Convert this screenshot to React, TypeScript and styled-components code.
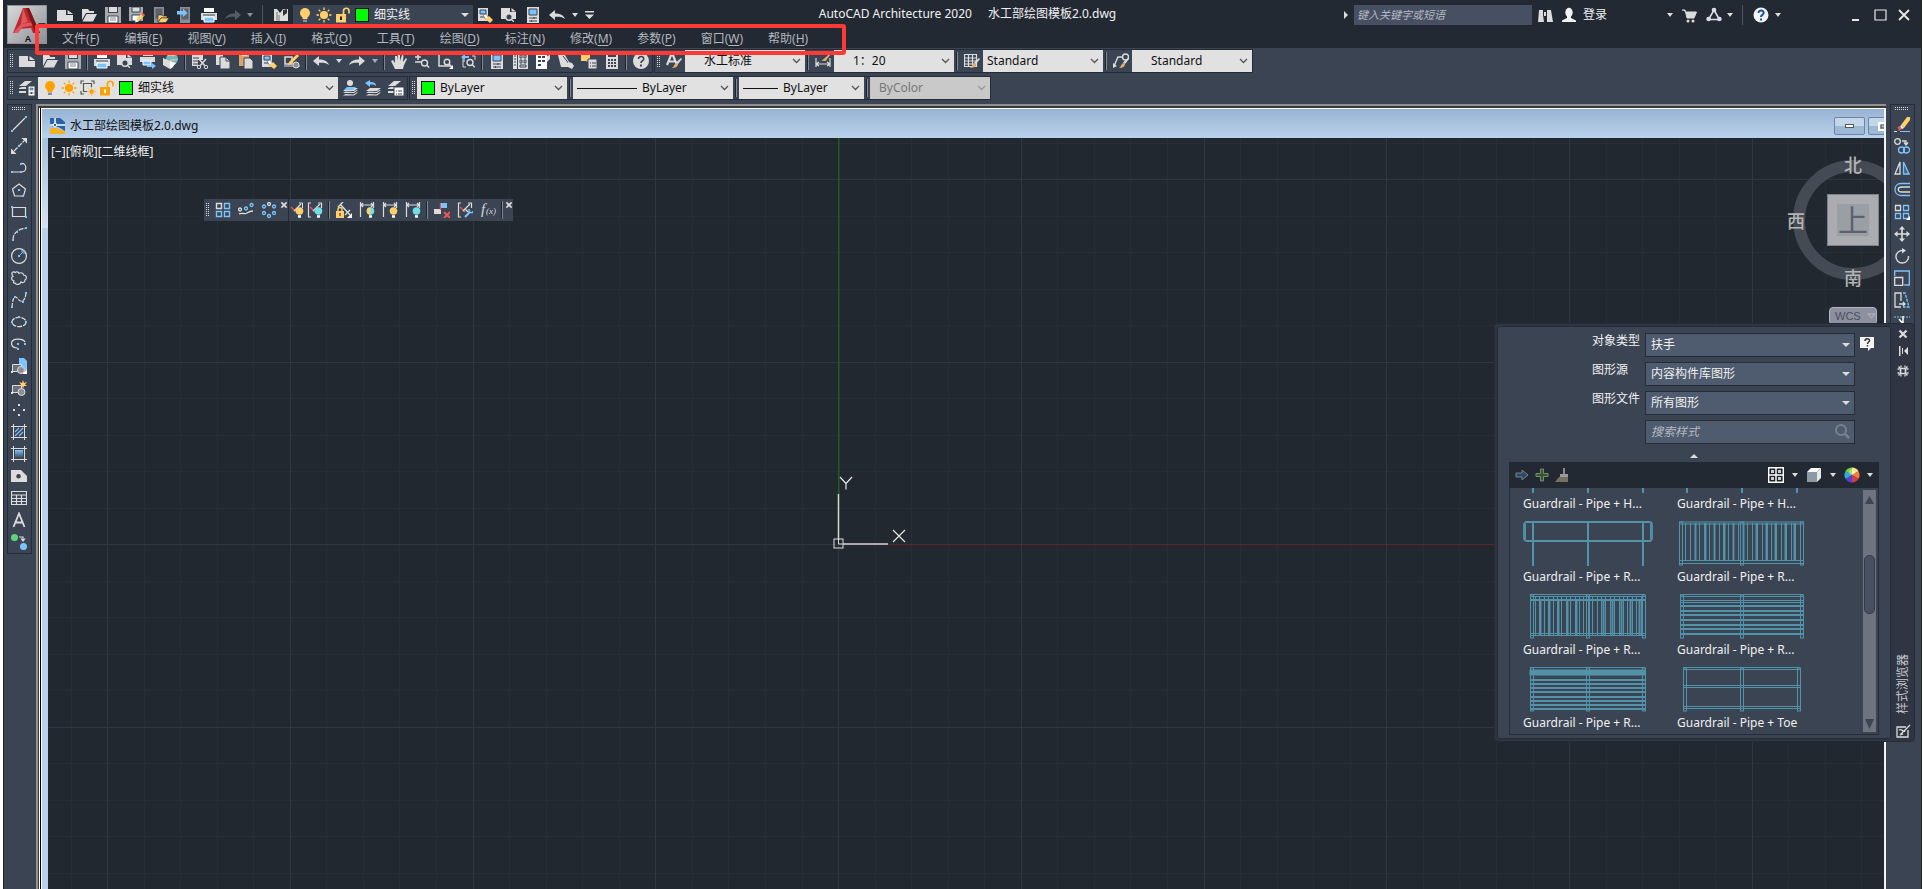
import React from "react";
import styled, { createGlobalStyle, css } from "styled-components";

const FONT = '"Noto Sans", "Noto Sans CJK SC", sans-serif';
const L = "#dcdcdc";
const B = "#7cc4ff";
const Y = "#ffcf6b";
const R = "#f0545a";
const P = "#3b4453";
const T = "#5293a9";

const GlobalStyle = createGlobalStyle`
  * { box-sizing: border-box; }
  body { margin: 0; background: #fff; font-family: ${FONT}; font-size: 12px; line-height: 16px; overflow: hidden; }
  button, select, input { font: inherit; color: inherit; border: 0; margin: 0; border-radius: 0; }
  button { background: none; padding: 0; }
  svg { display: block; flex: none; }
`;

/* ---------- icon drawings, all on a 16 x 16 grid ---------- */

const glass = (x: number, y: number, r = 3, c = L) => (
  <g fill="none" stroke={c} strokeWidth="1.4">
    <circle cx={x} cy={y} r={r} fill={P} />
    <path d={`M${x + r * 0.7} ${y + r * 0.7}l2.6 2.6`} />
  </g>
);
const dot = (x: number, y: number, c = B) => <rect x={x} y={y} width="2" height="2" fill={c} />;
const pencil = (
  <g>
    <path d="M7 12l6-6 2.5 2.5-6 6z" fill={Y} />
    <path d="M7 12l2.500 2.500L6 15.500z" fill="#fff" />
    <path d="M12 7l1.500-1.500L16 8l-1.500 1.500z" fill={R} />
  </g>
);
const brush = (
  <g>
    <path d="M16 6l-4 5-2-1.500L15 5z" fill={L} />
    <path d="M12 11c0 3-3 4-6 4 2-1 1.500-3 4-5z" fill="#e0ad70" />
  </g>
);
const layers = (c = L) => (
  <g fill={c}>
    <path d="M5 8h11l-4 3H1z" />
    <path d="M3.500 11.500L1 13h11l4-3h-1.500l-3 2z" />
    <path d="M3.500 14L1 15.500h11l4-3h-1.500l-3 2z" />
  </g>
);
const bulb = (c: string) => (
  <g>
    <circle cx="8" cy="6" r="5" fill={c} />
    <path d="M5.500 9h5v3h-5z" fill={c} />
    <path d="M6 12.500h4V15H6z" fill="#8a8f96" />
  </g>
);
const sun = (c: string) => (
  <g stroke={c} strokeWidth="1.300">
    <circle cx="8" cy="8" r="3.400" fill={c} />
    <path d="M8 .5v2.500M8 13v2.500M.5 8H3M13 8h2.500M2.700 2.700l1.700 1.700M11.600 11.600l1.700 1.700M2.700 13.300l1.700-1.700M11.600 4.400l1.700-1.700" />
  </g>
);
const lock = (c: string, hole: string) => (
  <g>
    <path d="M1 7h10v8.500H1z" fill={c} />
    <path d="M8.500 7V4a2.700 2.700 0 0 1 5.500 0v2.500" fill="none" stroke={c} strokeWidth="1.700" />
    <path d="M5 9.500h2V13H5z" fill={hole} />
  </g>
);
const undo = (c: string) => <path d="M0 8l6-5v3.500c5 0 8.500 1.500 10 5.500-2.500-2-5.500-2.500-10-2.200V13z" fill={c} />;
const redo = (c: string) => <path d="M16 8l-6-5v3.500C5 6.500 1.500 8 0 12c2.500-2 5.500-2.500 10-2.200V13z" fill={c} />;
const props = (
  <g>
    <path d="M2 0h12v16H2z" fill={L} />
    <path d="M4 2h8v6H4z" fill={B} stroke={P} />
    <path d="M4 11h8M4 14h8M9 10v2M6.500 13v2" stroke={P} />
  </g>
);
const dimBase = <path d="M1.500 0v15M14.500 0v6M2 3h12M4 1L2 3l2 2M12 1l2 2-2 2" fill="none" stroke={L} strokeWidth="1.200" />;
const lamp = (c: string, half?: string, x = 11.5) => (
  <g>
    <circle cx={x} cy="9" r="3.800" fill={c} />
    {half && <path d={`M${x} 5.200a3.800 3.800 0 0 0 0 7.600z`} fill={half} />}
    <path d={`M${x - 1.5} 13.200h3v2.500h-3z`} fill="#fff" />
  </g>
);
const bracket = <path d="M4 1H1.500v14H4M11 1h3.500v5" fill="none" stroke={L} strokeWidth="1.200" />;
const slash = (
  <g fill="none" strokeWidth="1.300">
    <path d="M3 5l5 5" stroke={R} />
    <path d="M6 9l7-7M8 7l3 3" stroke={L} />
  </g>
);

const ICONS: Record<string, React.ReactNode> = {
  fresh: <path d="M0 3h9v5h7v6H0zM10.500 3L16 7h-5.500z" fill={L} />,
  open: <path d="M1 2h6l1.500 2H13v2H5L1 13zM5.500 7H16l-4 7.500H1.500z" fill={L} />,
  save: (
    <g>
      <path d="M0 0h16v16H0z" fill="#a9abae" />
      <path d="M3 0h10v6H3z" fill={P} /><path d="M4 0h8v5H4z" fill={L} />
      <path d="M3 9h10v7H3z" fill="#fff" stroke={P} /><path d="M5 11h6M5 13h6" stroke="#888" />
    </g>
  ),
  saveAs: (
    <g>
      <path d="M0 0h14v14H0z" fill="#a9abae" /><path d="M3 0h8v5H3z" fill={L} stroke={P} />
      <path d="M3 8h8v6H3z" fill="#fff" stroke={P} />{pencil}
    </g>
  ),
  exportDoc: (
    <g>
      <path d="M1 0h10v16H1z" fill="#8c8f93" /><path d="M2.500 1.500h7v10h-7z" fill="#5b616b" />
      <path d="M5 8h4l1 1h4v2H8l-3 4z" fill={Y} stroke="#222933" strokeWidth=".6" /><path d="M8 11h8l-3 4.500H5z" fill={Y} stroke="#222933" strokeWidth=".6" />
    </g>
  ),
  importDoc: (
    <g>
      <path d="M3 0h10v16H3z" fill="#8c8f93" /><path d="M4.500 1.500h7v11h-7z" fill="#5b616b" />
      <path d="M0 4h6V1.500L10.500 6 6 10V7.500H0z" fill={B} />
    </g>
  ),
  print: (
    <g>
      <path d="M3 1h10v4H3z" fill="#fff" /><path d="M0 6h16v7H0z" fill={L} />
      <path d="M2 8h12" stroke={P} /><path d="M3 10h10v5H3z" fill={B} stroke="#fff" />
    </g>
  ),
  redo: redo(L),
  redoDim: redo("#555b66"),
  undo: undo(L),
  workspace: (
    <g>
      <path d="M1 2h3l3 4 3-4h5v12H1z" fill={L} /><path d="M4 5v9M6 8v6" stroke="#777" />
      <path d="M10 3l4-1v4l-4 3z" fill="#333" />
    </g>
  ),
  bulb: bulb(Y), bulbOn: bulb("#ffa200"), sun: sun(Y), sunOn: sun("#ffa200"),
  lock: lock(Y, "#222"), lockOn: lock("#ffa200", "#fff"),
  freeze: (
    <g>
      <path d="M1 4V1h3M11 1h3v3M1 11v3h3" fill="none" stroke="#555" strokeWidth="1.200" />
      <path d="M3.500 3.500h8v8h-8z" fill="none" stroke="#555" strokeWidth="1.200" />
      <g transform="translate(7 7) scale(.58)"><circle cx="8" cy="8" r="8" fill="#e1e1e1" />{sun("#ffa200")}</g>
    </g>
  ),
  match: (
    <g>
      <path d="M1 1h10v13H1z" fill={L} /><path d="M3 3h6v4H3z" fill={B} stroke={P} />
      <path d="M3 10h5" stroke={P} /><path d="M6 8l3-1 3 4-3 2z" fill="#fff" stroke={P} strokeWidth=".5" />
      <path d="M8 12l4-3 4 4-3 3z" fill={Y} />
    </g>
  ),
  preview: <g><path d="M0 1h9v4h6v7H0zM10.500 1L15 4.500h-4.500z" fill={L} />{glass(8, 10, 3.2)}</g>,
  props,
  publish: (
    <g>
      <path d="M3 0h10v3H3zM0 4h15v5H0z" fill={L} /><path d="M3 8h8v4H3z" fill={B} stroke="#fff" />
      <path d="M7 12h5v-2l4 3-4 3v-2H7z" fill={B} />
    </g>
  ),
  globe: (
    <g>
      <circle cx="9" cy="6" r="6" fill="#69b8c8" /><path d="M5 3c3-3 4 1 7-1M6 9c3-4 5-1 8-3" stroke="#e5c08a" strokeWidth="1.500" fill="none" />
      <path d="M0 5l7 3v8l-7-4z" fill={L} /><path d="M7 8l6 2-4 5-2 1z" fill="#fff" />
    </g>
  ),
  cut: (
    <g>
      <path d="M0 2h11v5H6v6H0z" fill={L} /><path d="M1 5h6M1 8h5M1 11h5" stroke={P} />
      <path d="M7 6l7 8M14 6l-7 8" stroke={L} strokeWidth="1.500" />
      <circle cx="7" cy="14" r="1.700" fill={P} stroke={L} /><circle cx="14" cy="14" r="1.700" fill={P} stroke={L} />
    </g>
  ),
  copy: <g><path d="M1 1h7v11H1z" fill={L} /><path d="M5 4h6l4 4v8H5z" fill={L} stroke={P} /><path d="M11 4v4h4" fill="none" stroke={P} /></g>,
  paste: <g><path d="M1 2h10v11H1z" fill="#d9a46a" /><path d="M4 0h5v3H4z" fill={L} /><path d="M6 5h6l3 3v8H6z" fill={L} stroke={P} /></g>,
  blockEdit: (
    <g>
      <path d="M1 4h7v7H1z" fill="none" stroke={L} strokeWidth="1.500" /><path d="M0 13h16" stroke={L} />
      <circle cx="12" cy="12" r="3" fill="#8c8f93" stroke={L} /><path d="M5 9l8-8 2 2-8 8-3 1z" fill={Y} />
    </g>
  ),
  pan: <path d="M4 16L0 8l2-1 2 3V3h2v5l1-7h2v7l2-6 1.500.5L12 9l3-4 1 1-3 6-1 4z" fill={L} />,
  zoomRt: <g><path d="M1 4h6M4 1v6M1 9h6" stroke={L} strokeWidth="1.500" />{glass(10.5, 10)}</g>,
  zoomWin: <g><path d="M2 1v12h12" fill="none" stroke={L} strokeWidth="1.500" />{glass(10, 9, 2.8)}<path d="M16 12v4h-4z" fill="#fff" /></g>,
  zoomPrev: <g><path d="M3 5v9h3M12 3h3v4M3 8h2" fill="none" stroke={L} /><path d="M1 4l4-3v2h4v2H5v2z" fill={B} />{glass(10, 9.5, 3)}</g>,
  design: <g><path d="M1 0h4v16H1zM6 0h10v16H6z" fill={L} /><path d="M8 2h2v3H8zM12 2h2v3h-2zM8 7h2v3H8zM12 7h2v3h-2zM8 12h6v2H8z" fill="none" stroke={P} /><path d="M3 2v12" stroke={P} strokeDasharray="2 1" /></g>,
  palettes: <g><path d="M1 0h11v16H1z" fill="#fff" /><path d="M3 3h3v2H3zM7 3h3v2H7zM3 7h3v2H3zM7 7h3v2H7zM3 11h3v2H3z" fill={P} /><path d="M12 3l3-1v4l-3 3z" fill={L} /></g>,
  sheetSet: <g><path d="M0 2h7l7 12H3z" fill={L} /><path d="M5 3l7 9" stroke={P} /><path d="M10 9l4 1 2 3-2 3-4-2z" fill={L} /></g>,
  markup: <g><path d="M0 1h9v7H0z" fill={Y} /><path d="M5 8h6v5" fill="none" stroke={B} /><path d="M7 6h9v10H7z" fill={L} stroke={P} /><path d="M9 10h1M11 10h4M9 13h1M11 13h4" stroke={P} /></g>,
  calc: <g><path d="M2 0h12v16H2z" fill={L} /><path d="M4 2h8v2H4z" fill={P} /><path d="M4 7h8M4 10h8M4 13h8" stroke={P} strokeWidth="2" strokeDasharray="2 1" /></g>,
  help: (
    <g>
      <circle cx="8" cy="8" r="8" fill={L} />
      <path d="M5.500 6c0-3.500 5.500-3.200 5.200 0-.2 2-2.700 1.900-2.700 4" fill="none" stroke={P} strokeWidth="1.700" />
      <path d="M7 11.500h2v2H7z" fill={P} />
    </g>
  ),
  textStyle: <g><path d="M1 12L5.500 1h1L11 12M3 8.500h6" fill="none" stroke={L} strokeWidth="2.200" />{brush}</g>,
  dimStyle: <g><path d="M1 5v9M15 5v9M1 11h14M4 9l-3 2 3 2M12 9l3 2-3 2" fill="none" stroke={L} strokeWidth="1.200" /><path d="M15 0l-4 4 1 2 4-5zM11 4c-2 1-2 3-5 3 3 2 6 1 6-1z" fill="#e0ad70" /></g>,
  tableStyle: <g><path d="M.5 1.500h12v12H.5zM.5 5h12M.5 8h12M.5 11h12M4.500 2v11M8.500 2v11" fill="none" stroke={L} strokeWidth="1.200" />{brush}</g>,
  leaderStyle: <g><path d="M1 13L5 4h4" fill="none" stroke={L} strokeWidth="1.400" /><path d="M0 15v-5l4 3z" fill={L} /><circle cx="12.500" cy="4" r="3" fill="none" stroke={L} strokeWidth="1.400" />{brush}</g>,
  layerProps: <g><path d="M6 1h7L7 6H0zM0 8l3-1h4v2H0zM0 11h7v2H0z" fill={L} /><path d="M9 6h7v10H9z" fill="#fff" stroke={P} /><path d="M11 8h3v2h-3z" fill={B} stroke={P} strokeWidth=".6" /><path d="M10.500 13h4M12.500 12v2" stroke={P} /></g>,
  layerCurrent: <g>{layers()}<path d="M5 7h9l-3 3H2z" fill={B} /><circle cx="8" cy="3" r="3" fill={L} /></g>,
  layerPrev: <g>{layers()}<path d="M0 3l5-3v2c4 0 6 1 6 4-2-1.500-3-1.700-6-1.500V7z" fill={B} /></g>,
  layerState: <g><path d="M6 1h7L7 6H0zM0 8l3-1h4v2H0zM0 11h7v2H0z" fill={L} /><path d="M6 7h10v9H6z" fill="#fff" stroke={P} /><path d="M8 11h1M10 11h4M8 14h1M10 14h4" stroke={P} /></g>,
  line: <g><path d="M2 14L14 2" stroke={L} strokeWidth="1.200" />{dot(0, 14)}{dot(14, 0)}</g>,
  xline: <g><path d="M3 13L13 3" stroke={L} strokeWidth="1.200" strokeDasharray="5 1" /><path d="M0 16v-5.500l5.500 5.500zM16 0v5.500L10.500 0z" fill={L} />{dot(7, 7)}</g>,
  pline: <g><path d="M2 12h7M10 3.500c6-1 6.500 8 1 8.500" fill="none" stroke={L} strokeWidth="1.200" />{dot(0, 11)}{dot(9, 3)}{dot(9, 11)}</g>,
  polygon: <g><path d="M8 2l6.500 5-2 7h-9l-2-7z" fill="none" stroke={L} strokeWidth="1.200" />{dot(7, 7)}{dot(11, 13)}</g>,
  rect: <g><path d="M1.500 3.500h13v9h-13z" fill="none" stroke={L} strokeWidth="1.200" />{dot(0, 2)}{dot(14, 12)}</g>,
  arc: <g><path d="M2 14C2 7 7 3 14 2.500" fill="none" stroke={L} strokeWidth="1.200" strokeDasharray="5 1" />{dot(1, 13)}{dot(5, 5)}{dot(14, 1)}</g>,
  circle: <g><circle cx="8" cy="8" r="7.400" fill="none" stroke={L} strokeWidth="1.200" />{dot(7, 7)}<path d="M9 7l3-3M10 3h3v3" fill="none" stroke={B} /></g>,
  cloud: <path d="M3 11C0 10 0 7 2 6.500-.5 3 2 0.500 4.500 2.500c1-1.500 3-.5 3.500.8 2-1.300 4.500 0 4.500 1.700 3.500 0 3.500 4 1.500 5 0 3-3 3-4 2-1 3-5 3-6 1-1.500.3-2-.5-1-2z" fill="none" stroke={L} strokeWidth="1.200" />,
  spline: <g><path d="M1 15C2 4 4 3 7 7s7 3 8-6" fill="none" stroke={L} strokeWidth="1.200" strokeDasharray="4 1" />{dot(0, 14)}{dot(3, 4)}{dot(11, 9)}{dot(14, 0)}</g>,
  ellipse: <g><ellipse cx="8" cy="8" rx="7" ry="4.700" fill="none" stroke={L} strokeWidth="1.200" strokeDasharray="5 1" />{dot(7, 2)}{dot(0, 7)}{dot(14, 7)}</g>,
  ellArc: <g><path d="M14 6c-2-4-13-4-13.500 1 0 4 3 5 6 5" fill="none" stroke={L} strokeWidth="1.200" />{dot(6, 7)}{dot(13, 7)}{dot(6, 12)}</g>,
  insert: <g><path d="M8 0h5l3 3v9H8z" fill={B} /><path d="M1.500 6.500h9v7h-9z" fill="#6b727e" stroke={L} />{dot(0, 13, L)}<circle cx="10" cy="12" r="3.500" fill="#8c8f93" stroke={L} /><path d="M16 11v5h-5z" fill="#fff" /></g>,
  block: <g><path d="M1.500 5.500h9v7h-9z" fill="#6b727e" stroke={L} />{dot(0, 12, L)}<circle cx="10.500" cy="12" r="3.500" fill="#8c8f93" stroke={L} /><path d="M12 0l1 3 3-1-2 2.500L16 6h-3l-1 2.500L11 6H8l2-1.500L8 2l3 1z" fill={Y} /></g>,
  point: <g>{dot(7, 2, L)}{dot(2, 7, L)}{dot(12, 7, L)}{dot(7, 12, L)}</g>,
  hatch: <g><path d="M2.500 0v16M13.500 0v16M0 2.500h16M0 13.500h16" stroke={L} /><path d="M4 8l4-4M4 12l8-8M8 12l4-4" stroke={B} strokeWidth="1.200" /></g>,
  gradient: <g><defs><linearGradient id="fillGrad" x1="0" x2="0" y1="0" y2="1"><stop offset="0" stopColor={B} /><stop offset="1" stopColor={P} /></linearGradient></defs><path d="M2.500 0v16M13.500 0v16M0 2.500h16M0 13.500h16" stroke={L} /><path d="M4 4h8v8H4z" fill="url(#fillGrad)" /></g>,
  region: <path fillRule="evenodd" d="M0 2h10l6 6v6H0zM7.500 6a2.300 2.300 0 1 0 .1 0z" fill={L} />,
  table: <path d="M.5 1.500h15v13H.5zM.5 5h15M.5 8.500h15M.5 11.500h15M5.500 5v9M10.500 5v9" fill="none" stroke={L} strokeWidth="1.200" />,
  mtext: <path d="M2.500 15L8 1.500 13.500 15M4.500 10.500h7" fill="none" stroke={L} strokeWidth="1.800" />,
  addSel: <g><circle cx="3.500" cy="3.500" r="3.500" fill="#5fd27c" /><circle cx="12.500" cy="12.500" r="3.500" fill={B} /><path d="M8 3h4v3M10 4.500L12 7l2-2.500" fill="none" stroke={L} strokeWidth="1.200" /></g>,
  erase: <g><path d="M7 9l6-8h3v3l-6 8z" fill={Y} /><path d="M7 9l3 3-2 1H5z" fill="#fff" /><path d="M3.500 11l2.500-1 2 3-3 2z" fill={R} /><path d="M0 15.500h3" stroke={L} /><path d="M6 15.500h10" stroke={B} /></g>,
  copyObj: <g fill="none" strokeWidth="1.300"><circle cx="3.500" cy="3.500" r="2.800" stroke={L} /><path d="M8 3h4v3M10 4.500L12 7l2-2.500" stroke={L} /><circle cx="7.500" cy="12" r="3" stroke={B} /><circle cx="12.500" cy="12" r="3" stroke={B} /></g>,
  mirror: <g fill="none" strokeWidth="1.300"><path d="M6 2v12H1z" stroke={L} /><path d="M9.500 2v12H15z" stroke={B} fill="#41658a" /></g>,
  offset: <g fill="none" strokeWidth="1.300"><path d="M16 1.500H7C-1 1.500-1 13.500 7 13.500h9" stroke={B} /><path d="M16 5H8C3 5 3 10 8 10h8" stroke={L} /></g>,
  array: <g fill="none" strokeWidth="1.300"><path d="M1.500 1.500h5v5h-5z" stroke={L} /><path d="M9.500 1.500h5v5h-5zM1.500 9.500h5v5h-5zM9.500 9.500h5v5h-5z" stroke={B} /><path d="M16 12v4h-4z" fill="#fff" /></g>,
  move: <g><path d="M8 2v12M2 8h12" stroke={L} strokeWidth="1.600" /><path d="M8 0l3 3.500H5zM8 16l3-3.500H5zM0 8l3.500-3v6zM16 8l-3.500-3v6z" fill={L} /></g>,
  rotate: <g><path d="M9 2.500A6.300 6.300 0 1 0 14.500 8" fill="none" stroke={L} strokeWidth="1.400" /><path d="M8 0l4 2.500-4 3z" fill={L} /></g>,
  scale: <g fill="none" strokeWidth="1.300"><path d="M.7 6V1h14.600v14h-5" stroke={B} /><path d="M.7 7.500h8v8h-8z" stroke={L} /></g>,
  stretch: <g fill="none" strokeWidth="1.300"><path d="M7 9V1H1v14h6M5 12h6M9 10l2 2-2 2" stroke={L} /><path d="M9 1h2l4 14h-6" stroke={B} strokeDasharray="3 1" /></g>,
  trim: <g><path d="M0 3h16" stroke={B} strokeDasharray="2 1" /><path d="M5 5l5 6M9 2v12" stroke="#fff" strokeWidth="1.500" /></g>,
  gridArr: <g fill="none" strokeWidth="1.400"><path d="M1.500 1.500h5v5h-5z" stroke={L} /><path d="M9.500 1.500h5v5h-5zM1.500 9.500h5v5h-5zM9.500 9.500h5v5h-5z" stroke={B} /></g>,
  pathArr: <g fill="none" strokeWidth="1.300"><circle cx="2" cy="7.500" r="1.500" stroke={L} /><circle cx="8" cy="6.500" r="1.500" stroke={B} /><circle cx="13.500" cy="3" r="1.500" stroke={B} /><path d="M1 12c3-2 5 1 8-1s4-2 6-2" stroke={L} /></g>,
  polarArr: <g fill="none" strokeWidth="1.300" stroke={B}><circle cx="8" cy="2" r="1.500" stroke={L} /><circle cx="13" cy="4.500" r="1.500" /><circle cx="13" cy="11" r="1.500" /><circle cx="8" cy="14" r="1.500" /><circle cx="3" cy="11" r="1.500" /><circle cx="3" cy="4.500" r="1.500" /></g>,
  geoShow: <g>{slash}<path d="M11 1h3.500v5" fill="none" stroke={L} />{lamp(Y)}</g>,
  geoAll: <g>{bracket}{slash}{lamp("#6fdfe6")}</g>,
  aligned: <g><path d="M2 5l5-5M4 2l10 11M9 13l5-5" stroke={L} strokeWidth="1.400" fill="none" /><path d="M16 16v-5l-5 5z" fill="#fff" /><path d="M0 9h8v7H0z" fill={Y} /><path d="M2 9V7c0-2 4-2 4 0v2" fill="none" stroke={Y} strokeWidth="1.400" /><path d="M4 11v3" stroke="#222" /></g>,
  dynShow: <g>{dimBase}{lamp("#6fdfe6", Y)}</g>,
  dynAll: <g>{dimBase}{lamp(Y)}</g>,
  dynHide: <g>{dimBase}{lamp("#6fdfe6")}</g>,
  delCon: <g><path d="M0 7h7v5H0z" fill={L} /><path d="M6.500 1v7" stroke={R} strokeWidth="1.400" /><path d="M7 1h6v5H7z" fill={B} /><path d="M10 10l6 6M16 10l-6 6" stroke={R} strokeWidth="2" /></g>,
  conSet: <g>{bracket}{slash}<path d="M8 15l5-5" stroke={B} strokeWidth="2" /><path d="M12 7v3.500h4V9" fill="none" stroke={B} strokeWidth="1.600" /></g>,
  binoc: <g fill={L}><path d="M2 3h4v5l1 7H1zM10 3h4l2 12h-6zM7 5h2v4H7z" /></g>,
  user: <g fill="#f2f2f2"><ellipse cx="8" cy="5.500" rx="3.700" ry="4.700" /><path d="M6 8h4v3l5 2.500V15H1v-1.500L6 11z" /></g>,
  cart: <g><path d="M1 3h3l2 8h7l2.500-6H5" fill={L} stroke={L} /><circle cx="7" cy="14" r="1.500" fill={L} /><circle cx="12" cy="14" r="1.500" fill={L} /></g>,
  autodesk: <g><path d="M8 3l5.500 9.500h-11z" fill="none" stroke={L} strokeWidth="1.600" /><circle cx="8" cy="3" r="2.300" fill="#d7dcef" /><circle cx="2.600" cy="12" r="2.300" fill="#d7dcef" /><circle cx="13.400" cy="12" r="2.300" fill="#d7dcef" /></g>,
  helpBlue: (
    <g>
      <circle cx="8" cy="8" r="7.500" fill="#f2f4f8" />
      <path d="M5.500 6c0-3.500 5.500-3.200 5.200 0-.2 2-2.700 1.900-2.700 4" fill="none" stroke="#1d4f9c" strokeWidth="2" /><path d="M7 11.500h2v2H7z" fill="#1d4f9c" />
    </g>
  ),
  min: <path d="M4 12h7v2H4z" fill="#e8e8e8" />,
  max: <path d="M3 3h11v10H3z" fill="none" stroke="#e8e8e8" strokeWidth="1.200" />,
  close: <path d="M3 3l10 10M13 3L3 13" stroke="#e8e8e8" strokeWidth="1.800" />,
  closeSm: <path d="M4.500 4.500l7 7M11.500 4.500l-7 7" stroke={L} strokeWidth="2.200" />,
  hide: <g fill={L}><path d="M4 3h1.500v10H4zM7 5h1v6H7zM13 4v8L9 8z" /></g>,
  gear: <g fill="none" stroke={L}><path d="M5.500 5.500h5v5h-5z" strokeWidth="1.600" /><path d="M6 2.500v2M10 2.500v2M6 11.500v2M10 11.500v2M2.500 6h2M2.500 10h2M11.500 6h2M11.500 10h2M3.500 3.500l1.500 1.500M12.500 3.500L11 5M3.500 12.500L5 11M12.500 12.500L11 11" strokeWidth="1.300" /></g>,
  hint: <g><path d="M1 1h14v11h-3l-3 3v-3H1z" fill="#f4f4f4" /><path d="M6 5c0-3 4.500-3 4.500-.5C10.500 6 8.500 6 8.500 8" fill="none" stroke="#333" strokeWidth="1.500" /><path d="M7.700 9h1.500v1.500H7.700z" fill="#333" /></g>,
  search: <g fill="none" stroke="#77808f" strokeWidth="2"><circle cx="7" cy="6" r="5" /><path d="M10.500 9.500L15 14" strokeWidth="2.600" /></g>,
  arrowR: <path d="M2 6h6V3l6 5-6 5v-3H2z" fill="#2c4866" stroke="#77828f" />,
  plus: <path d="M6.500 2h3v4.500H14v3H9.500V14h-3V9.500H2v-3h4.500z" fill="#31572b" stroke="#7c8a74" />,
  broom: <g><path d="M9 1h2v7H9z" fill="#8b8b8b" /><path d="M6 7h8v3H6z" fill="#9a9a9a" /><path d="M5 10h9v5H1z" fill="#77705f" /></g>,
  tiles: <g><path d="M.7.7h14.600v14.600H.7zM8 1v14M1 8h14" fill="#1c222b" stroke="#fff" strokeWidth="1.400" /><path d="M3 3h3v3H3zM10 3h3v3h-3zM3 10h3v3H3zM10 10h3v3h-3z" fill="#c8ccd4" /></g>,
  cube: <g><path d="M1 5h10v10H1z" fill="#8f98a5" /><path d="M1 5l4-4h10l-4 4z" fill="#fff" /><path d="M11 5l4-4v10l-4 4z" fill="#e8e8e8" /></g>,
  wheel: (
    <g>
      <path d="M8 8L8 .5A7.500 7.500 0 0 1 14.500 4.200z" fill="#f6e58a" /><path d="M8 8l6.500-3.800a7.500 7.500 0 0 1 0 7.600z" fill="#f0803c" />
      <path d="M8 8l6.500 3.800A7.500 7.500 0 0 1 8 15.500z" fill="#d83a48" /><path d="M8 8v7.500a7.500 7.500 0 0 1-6.500-3.700z" fill="#5142d6" />
      <path d="M8 8l-6.500 3.800a7.500 7.500 0 0 1 0-7.600z" fill="#39a8d8" /><path d="M8 8L1.500 4.200A7.500 7.500 0 0 1 8 .5z" fill="#6fce4a" />
      <circle cx="8" cy="5" r="3" fill="#fff" opacity=".35" />
    </g>
  ),
  edit: <g fill="none" stroke={L} strokeWidth="1.300"><path d="M11 4H2v10h11V7" /><path d="M5 12l10-10M4 7c3-2 4 3 6 1M5 12l3-1" /></g>,
  dwg: (
    <g>
      <path d="M0 0h10l5 4v6L0 8z" fill="#2a62a8" /><path d="M0 10h6l9 3v3H0z" fill="#f5b324" />
      <path d="M0 7h15M5 0v9" stroke="#fff" strokeWidth="1.500" /><circle cx="5" cy="7" r="1.800" fill="#2a62a8" stroke="#fff" /><path d="M15 8v5L7 8z" fill="#2a62a8" />
    </g>
  ),
};

const Icon = ({ name, size = 16 }: { name: string; size?: number }) => (
  <svg width={size} height={size} viewBox="0 0 16 16" aria-hidden="true">{ICONS[name]}</svg>
);
const Down = ({ color = L, size = 7 }: { color?: string; size?: number }) => (
  <svg width={size} height="4" viewBox="0 0 7 4" preserveAspectRatio="none" aria-hidden="true"><path d="M0 0h7L3.500 4z" fill={color} /></svg>
);
const Chevron = ({ color = "#555" }: { color?: string }) => (
  <svg width="9" height="6" viewBox="0 0 9 6" aria-hidden="true"><path d="M1 1l3.500 3.500L8 1" fill="none" stroke={color} strokeWidth="1.300" /></svg>
);

/* ---------- shared parts ---------- */

const Shell = styled.div`
  position: relative;
  display: flex;
  flex-direction: column;
  height: 100vh;
  margin: 0 1px 0 3px;
  border-left: 1px solid #1f252e;
  border-right: 1px solid #1f252e;
  background: ${P};
  color: #f0f0f0;
`;
const ToolButton = styled.button<{ $w?: number; $h?: number }>`
  display: flex;
  flex: none;
  align-items: center;
  justify-content: center;
  width: ${(p) => p.$w ?? 23}px;
  height: ${(p) => p.$h ?? 22}px;
`;
const Tool = ({ icon, w, h }: { icon: string; w?: number; h?: number }) => (
  <ToolButton type="button" aria-label={icon} $w={w} $h={h}><Icon name={icon} /></ToolButton>
);
const Tools = ({ names, w, h }: { names: string; w?: number; h?: number }) => (
  <>{names.split(" ").map((n) => <Tool key={n} icon={n} w={w} h={h} />)}</>
);
const Drop = ({ w = 13, color, label = "more" }: { w?: number; color?: string; label?: string }) => (
  <ToolButton type="button" aria-label={label} $w={w}><Down color={color} size={6} /></ToolButton>
);
const Divider = styled.span`
  flex: none;
  width: 2px;
  height: 18px;
  margin: 0 2px;
  background: linear-gradient(90deg, #1f252e 50%, #808793 50%);
`;
const Grip = styled.span<{ $flat?: boolean }>`
  flex: none;
  width: 4px;
  height: 14px;
  margin: 0 1px 0 2px;
  background: conic-gradient(${P} 75%, #d5d5d5 0) 0 0 / 2px 2px;
  ${(p) => p.$flat && css`width: 14px; height: 4px; margin: 2px auto;`}
`;

/* ---------- header ---------- */

const Header = styled.header`
  flex: none;
  display: grid;
  grid-template-columns: 40px minmax(0, 1fr);
  grid-template-rows: 28px 20px;
  padding-left: 3px;
  background: #222933;
`;
const Logo = styled.button`
  grid-row: 1 / 3;
  align-self: start;
  width: 40px;
  height: 39px;
  margin-top: 5px;
  border: 1px solid #8e9196;
  background: linear-gradient(135deg, #d8d9db, #8d8f93);
`;
const TitleRow = styled.div`
  display: flex;
  align-items: center;
  padding: 2px 5px 0 6px;
`;
const Caption = styled.h1`
  flex: 1;
  display: flex;
  justify-content: center;
  gap: 16px;
  margin: 0;
  padding-bottom: 3px;
  font-size: 12px;
  font-weight: 400;
  white-space: nowrap;
`;
const Rule = styled.span`
  flex: none;
  width: 1px;
  height: 20px;
  margin: 0 6px 0 7px;
  background: #4b5364;
`;
const HelpSearch = styled.input`
  width: 178px;
  height: 20px;
  padding: 0 3px 2px;
  background: #474f62;
  font-size: 11px;
  &::placeholder { color: #b4b9c3; font-style: italic; opacity: 1; }
`;
const LoginButton = styled.button`
  display: flex;
  align-items: center;
  gap: 6px;
  width: 107px;
  padding-left: 3px;
`;
const WindowButtons = styled.div`
  display: flex;
  margin-left: 60px;
`;
const MenuBar = styled.nav`
  display: flex;
  align-items: center;
  gap: 25px;
  padding-left: 15px;
  padding-top: 2px;
`;
const MenuLink = styled.a`
  color: #b3b7be;
  text-decoration: none;
  white-space: nowrap;
  u { text-underline-offset: 2px; }
`;
const Highlight = styled.div`
  position: absolute;
  z-index: 5;
  left: 31px;
  top: 24px;
  width: 811px;
  height: 31px;
  border: 4px solid #ff3a36;
  border-radius: 3px;
  pointer-events: none;
`;

/* ---------- combo boxes ---------- */

const ComboBox = styled.span<{ $w: number; $dark?: boolean; $off?: boolean }>`
  display: flex;
  flex: none;
  align-items: center;
  width: ${(p) => p.$w}px;
  height: ${(p) => (p.$dark ? 20 : 22)}px;
  padding: 0 4px;
  background: ${(p) => (p.$dark ? P : p.$off ? "#c9c9c9" : "#e1e1e1")};
  color: ${(p) => (p.$dark ? "#f0f0f0" : p.$off ? "#777" : "#111")};
  select {
    flex: 1;
    min-width: 0;
    height: 20px;
    padding: 0;
    background: none;
    appearance: none;
    outline: 0;
    opacity: 1;
  }
  option { color: #111; }
`;
const Indent = styled.span<{ $w: number }>`
  flex: none;
  width: ${(p) => p.$w}px;
`;
const Swatch = styled.span`
  flex: none;
  width: 14px;
  height: 14px;
  margin-right: 5px;
  border: 1px solid #111;
  background: #0f0;
`;
const Stroke = styled.span<{ $w: number }>`
  flex: none;
  width: ${(p) => p.$w}px;
  height: 1px;
  margin-right: 5px;
  background: #111;
`;
type ComboProps = { label: string; value: string; w: number; dark?: boolean; off?: boolean; lead?: React.ReactNode };
const Combo = ({ label, value, w, dark, off, lead }: ComboProps) => (
  <ComboBox $w={w} $dark={dark} $off={off}>
    {lead}
    <select aria-label={label} disabled={off}><option>{value}</option></select>
    {dark ? <Down size={8} /> : <Chevron color={off ? "#999" : undefined} />}
  </ComboBox>
);
const LayerLead = styled.span`
  display: flex;
  align-items: center;
  gap: 3px;
`;

/* ---------- toolbars ---------- */

const ToolbarRow = styled.div`
  flex: none;
  display: flex;
  gap: 1px;
  padding-left: 3px;
  margin-bottom: 3px;
`;
const ToolbarArea = styled.div`
  flex: none;
  padding-top: 1px;
`;
const Panel = styled.div`
  display: flex;
  align-items: center;
  height: 24px;
  border: 1px solid #262c37;
`;
const SideBar = styled.aside`
  flex: none;
  align-self: flex-start;
  display: flex;
  flex-direction: column;
  align-items: center;
  width: 25px;
  padding-right: 1px;
  border: 1px solid #262c37;
`;

/* ---------- document window ---------- */

const Work = styled.main`
  position: relative;
  flex: 1;
  min-height: 0;
  display: flex;
  gap: 4px;
  padding: 1px 6px 0 3px;
`;
const Frame = styled.section`
  flex: 1;
  min-width: 0;
  display: flex;
  border: solid #929292;
  border-width: 2px 0 0 2px;
`;
const FrameInner = styled.div`
  flex: 1;
  min-width: 0;
  display: flex;
  border: solid #3a3a3a;
  border-width: 2px 0 0 1px;
`;
const DocWindow = styled.div`
  flex: 1;
  min-width: 0;
  display: flex;
  flex-direction: column;
  padding: 1px 0 0 2px;
  border-left: 1px solid #fff;
  border-right: 2px solid #f4f4f4;
  background: linear-gradient(#9ab5d3 0, #d4e2f3 120px, #b9d0ea 120px);
  box-shadow: inset 1px 0 0 #000, inset 2px 1px 0 #fff;
`;
const DocTitle = styled.div`
  flex: none;
  display: flex;
  align-items: center;
  gap: 4px;
  height: 29px;
  padding: 5px 0 0 8px;
  overflow: hidden;
  background: linear-gradient(#98b3d2, #b9d1eb);
  color: #111;
`;
const DocButtons = styled.div`
  display: flex;
  gap: 3px;
  margin-left: auto;
  margin-right: -15px;
`;
const DocButton = styled.button`
  width: 31px;
  height: 18px;
  border: 1px solid #6d86a5;
  border-radius: 2px;
  background: linear-gradient(#c3d6ea 50%, #9db9d6 50%);
  display: flex;
  align-items: center;
  justify-content: center;
`;
const Viewport = styled.div`
  position: relative;
  flex: 1;
  min-height: 0;
  margin-left: 6px;
  overflow: hidden;
  background: #212830;
`;
const Drawing = styled.svg`
  position: absolute;
  inset: 0;
  width: 100%;
  height: 100%;
`;
const ViewLabel = styled.div`
  position: relative;
  padding: 6px 3px;
`;
const Floating = styled.div`
  position: absolute;
  left: 156px;
  top: 61px;
  display: flex;
`;
const FloatBar = styled.div`
  display: flex;
  align-items: center;
  height: 22px;
  background: ${P};
  & + & { border-left: 1px solid #262c37; overflow: hidden; }
`;
const FloatClose = styled.button`
  align-self: flex-start;
  width: 8px;
  height: 12px;
  display: flex;
  align-items: center;
  justify-content: center;
`;
const ViewCube = styled.svg`
  position: absolute;
  right: -38px;
  top: 14px;
`;
const Wcs = styled.button`
  position: absolute;
  right: 7px;
  top: 169px;
  display: flex;
  align-items: center;
  gap: 6px;
  width: 48px;
  height: 18px;
  padding: 0 5px;
  border: 1px solid #b3b6c0;
  border-radius: 4px;
  background: #8d909e;
  color: #4a5060;
  font: 11px "Liberation Sans", sans-serif;
`;

const XS = Array.from({ length: 52 }, (_, i) => ({ p: Math.round(22.5 + i * 36.55), major: i % 5 === 1 }));
const YS = Array.from({ length: 22 }, (_, i) => ({ p: Math.round(4.5 + i * 36.5), major: i % 5 === 1 }));

const Grid = () => (
  <Drawing aria-hidden="true">
    {[false, true].map((m) => (
      <g key={String(m)} fill={m ? "#2f3644" : "#262d37"}>
        {XS.filter((l) => l.major === m).map((l) => <rect key={`x${l.p}`} x={l.p} y="0" width="1" height="100%" />)}
        {YS.filter((l) => l.major === m).map((l) => <rect key={`y${l.p}`} x="0" y={l.p} width="100%" height="1" />)}
      </g>
    ))}
    <rect x="790" y="0" width="1.500" height="356" fill="#205e20" />
    <rect x="840" y="406" width="100%" height="1" fill="#6b2028" />
    <path d="M790.500 356v46" stroke="#cfdccb" strokeWidth="1.500" />
    <path d="M795 406h45" stroke="#e5cfcc" strokeWidth="1.500" />
    <rect x="786" y="401" width="9" height="9" fill="none" stroke="#e0e0e0" />
    <path d="M790.500 402v4h4" fill="none" stroke="#e0e0e0" />
    <path d="M792 339l6 6.500 6-6.500M798 345.500v6M845 392l12 12M857 392l-12 12" fill="none" stroke="#e6e6e6" strokeWidth="1.200" />
  </Drawing>
);

const Cube = () => (
  <ViewCube width="138" height="142" viewBox="-6 0 138 142" aria-label="ViewCube">
    <circle cx="63" cy="68" r="54" fill="none" stroke="#454b55" strokeWidth="12" />
    <g fill="#b4b4b4" fontFamily={FONT} fontSize="18" fontWeight="500" textAnchor="middle">
      <text x="63" y="20">北</text>
      <text x="6" y="76">西</text>
      <text x="63" y="133">南</text>
    </g>
    <rect x="37.500" y="42.500" width="51" height="51" fill="#abacb1" stroke="#80838a" />
    <rect x="47" y="52" width="32" height="32" fill="#9a9ea5" />
    <text x="63" y="79" fill="#5b626c" fontFamily='"Noto Sans CJK SC", sans-serif' fontSize="30" textAnchor="middle">上</text>
  </ViewCube>
);

/* ---------- styles browser palette ---------- */

const Palette = styled.section`
  position: absolute;
  right: 6px;
  top: 220px;
  z-index: 3;
  display: flex;
  width: 421px;
  height: 419px;
  padding: 2px 0 2px 2px;
  border: 1px solid #262c37;
  border-radius: 4px;
  background: #2f3542;
`;
const PaletteBody = styled.div`
  flex: 1;
  min-width: 0;
  display: flex;
  flex-direction: column;
  padding: 6px 11px 3px;
  border: 1px solid #262c37;
  border-radius: 3px;
  background: ${P};
`;
const Field = styled.div`
  display: flex;
  height: 24px;
  margin: 0 0 5px 83px;
  label { width: 53px; white-space: nowrap; }
`;
const FieldBox = styled.span`
  display: flex;
  align-items: center;
  width: 210px;
  height: 24px;
  margin-right: 4px;
  padding-right: 4px;
  border: 1px solid #262c37;
  background: #4f5b6f;
  select, input {
    flex: 1;
    min-width: 0;
    height: 20px;
    padding: 0 0 1px 5px;
    background: none;
    appearance: none;
    outline: 0;
  }
  option { color: #111; }
  input::placeholder { color: #b4b9c3; font-style: italic; opacity: 1; }
`;
const Collapse = styled.button`
  height: 13px;
  margin-left: 170px;
  width: 30px;
  display: flex;
  align-items: center;
  justify-content: center;
`;
const ListTools = styled.div`
  flex: none;
  display: flex;
  align-items: center;
  height: 26px;
  padding: 0 3px;
  background: #222933;
`;
const Push = styled.span`
  flex: 1;
`;
const List = styled.div`
  flex: 1;
  min-height: 0;
  display: flex;
  border: 1px solid #262c37;
  border-top: 0;
  overflow: hidden;
`;
const Cards = styled.div`
  flex: 1;
  display: flex;
  flex-direction: column;
  justify-content: flex-end;
  padding: 0 0 1px 13px;
  overflow: hidden;
`;
const CardGrid = styled.div`
  flex: none;
  display: grid;
  grid-template-columns: 154px 154px;
  row-gap: 7px;
`;
const Card = styled.figure`
  margin: 0;
  figcaption { height: 20px; line-height: 20px; white-space: nowrap; }
`;
const ScrollTrack = styled.div`
  flex: none;
  display: flex;
  flex-direction: column;
  align-items: center;
  justify-content: space-between;
  width: 13px;
  margin: 2px 2px 2px 0;
  padding: 6px 0 3px;
  background: #6d737f;
`;
const ScrollThumb = styled.span`
  width: 11px;
  height: 59px;
  margin-bottom: 54px;
  border: 1px solid #343c49;
  border-radius: 5px;
  background: #465060;
`;
const PaletteStrip = styled.div`
  flex: none;
  display: flex;
  flex-direction: column;
  align-items: center;
  width: 23px;
`;
const StripTitle = styled.span`
  margin: auto 0 9px;
  writing-mode: vertical-rl;
  text-orientation: sideways;
  transform: rotate(180deg);
  color: #c4c8cf;
`;

const rails = (xs: number[], y1: number, y2: number) => xs.map((x) => <path key={x} d={`M${x} ${y1}V${y2}`} />);
const bars = (ys: number[], x1: number, x2: number) => ys.map((y) => <path key={y} d={`M${x1} ${y}H${x2}`} />);
const posts = (xs: number[], y = 1) => xs.map((x) => <rect key={x} x={x} y={y} width="3" height={44 - y} />);
const range = (n: number, from: number, step: number) => Array.from({ length: n }, (_, i) => Math.round(from + i * step) + 0.5);

const THUMBS: Record<string, React.ReactNode> = {
  plain: (
    <g>
      <rect x="1" y="1" width="128" height="19" rx="3" strokeWidth="1.800" /><path d="M2.500 3v15M127.500 3v15" />
      <path d="M10 2v43M65 2v43M120 2v43" strokeWidth="2" />
    </g>
  ),
  picketA: (
    <g>
      <rect x="2.500" y="1" width="124" height="2" />{bars([39.5, 42.5], 2, 127)}{posts([2.5, 63.5, 123.5])}
      {rails(range(25, 8, 4.8), 2, 40)}<g strokeWidth="2">{rails(range(6, 18, 9.5), 2, 40)}{rails(range(5, 79, 9.5), 2, 40)}</g>
    </g>
  ),
  picketB: (
    <g>
      {bars([0.5, 2.5, 39.5, 41.5], 7, 122)}<path d="M7 6h115" strokeWidth="2" />{posts([7.5, 63.5, 119.5])}
      {rails(range(25, 12, 4.4), 2, 41)}<g strokeWidth="2">{rails(range(5, 17, 9), 6, 41)}{rails(range(5, 80, 9), 6, 41)}</g>
    </g>
  ),
  barsA: (
    <g>
      {bars([0.5, 2.5, 6.5, 8.5], 3, 126)}<g strokeWidth="2">{bars([12, 17, 21, 26, 31, 35, 40], 3, 126)}</g>{posts([3.5, 63.5, 123.5])}
    </g>
  ),
  barsB: (
    <g>
      {bars([0.5], 7, 122)}<rect x="7" y="3" width="115" height="5" fill={T} />
      <g strokeWidth="2">{bars([13, 17, 21, 25, 30, 34, 38, 42], 7, 122)}</g>{posts([7.5, 63.5, 119.5])}
    </g>
  ),
  toe: <g>{bars([0.5, 2.5, 18.5, 20.5, 39.5, 41.5], 6, 123)}{posts([6.5, 63.5, 120.5])}</g>,
};
const CARDS: [string, string][] = [
  ["plain", "Guardrail - Pipe + H..."], ["plain", "Guardrail - Pipe + H..."],
  ["plain", "Guardrail - Pipe + R..."], ["picketA", "Guardrail - Pipe + R..."],
  ["picketB", "Guardrail - Pipe + R..."], ["barsA", "Guardrail - Pipe + R..."],
  ["barsB", "Guardrail - Pipe + R..."], ["toe", "Guardrail - Pipe + Toe"],
];
const FIELDS = [["type", "对象类型", "扶手"], ["source", "图形源", "内容构件库图形"], ["file", "图形文件", "所有图形"]];

const StylesPalette = () => (
  <Palette>
    <PaletteBody>
      {FIELDS.map(([id, label, value], i) => (
        <Field key={id}>
          <label htmlFor={id}>{label}</label>
          <FieldBox><select id={id}><option>{value}</option></select><Down size={8} /></FieldBox>
          {i === 0 && <Tool icon="hint" w={16} />}
        </Field>
      ))}
      <Field>
        <label htmlFor="find" aria-label="搜索样式" />
        <FieldBox><input id="find" placeholder="搜索样式" /><Icon name="search" /></FieldBox>
      </Field>
      <Collapse type="button" aria-label="collapse">
        <svg width="8" height="4"><path d="M0 4h8L4 0z" fill={L} /></svg>
      </Collapse>
      <ListTools>
        <Tools names="arrowR plus broom" w={20} />
        <Push />
        <Tool icon="tiles" /><Drop w={15} /><Tool icon="cube" /><Drop w={15} /><Tool icon="wheel" /><Drop w={13} />
      </ListTools>
      <List>
        <Cards>
          <CardGrid>
            {CARDS.map(([kind, name], i) => (
              <Card key={i}>
                <svg width="130" height="46" fill="none" stroke={T} aria-hidden="true">{THUMBS[kind]}</svg>
                <figcaption>{name}</figcaption>
              </Card>
            ))}
          </CardGrid>
        </Cards>
        <ScrollTrack>
          <svg width="9" height="8"><path d="M0 8h9L4.500 0z" fill="#3b4453" /></svg>
          <ScrollThumb />
          <svg width="9" height="10"><path d="M0 0h9L4.500 10z" fill="#3b4453" /></svg>
        </ScrollTrack>
      </List>
    </PaletteBody>
    <PaletteStrip>
      <Tool icon="closeSm" h={15} />
      <Tools names="hide gear" h={20} />
      <StripTitle>样式浏览器</StripTitle>
      <Tool icon="edit" h={16} />
    </PaletteStrip>
  </Palette>
);

/* ---------- page ---------- */

const MENUS = ["文件F", "编辑E", "视图V", "插入I", "格式O", "工具T", "绘图D", "标注N", "修改M", "参数P", "窗口W", "帮助H"];

export default function App() {
  return (
    <Shell>
      <GlobalStyle />
      <Header>
        <Logo type="button" aria-label="application menu">
          <svg width="38" height="37" viewBox="0 0 38 37">
            <path d="M5 27L15 2h6l11 25h-7l-2-5-12 1-1 4z" fill="#b92a31" />
            <path d="M15 2l-2 16 7-2-3-8zM5 27l8-9 12-2 3 3-13 2-5 6z" fill="#e0565a" />
            <path d="M18 2h3l11 25h-5z" fill="#7f161c" />
            <text x="20" y="36" fontFamily="Liberation Sans, sans-serif" fontSize="9" fontWeight="700" textAnchor="middle" fill="#111">A</text>
            <path d="M30 17h8l-4 4z" fill="#333" />
          </svg>
        </Logo>
        <TitleRow>
          <Tools names="fresh open save saveAs exportDoc importDoc print redoDim" w={24} />
          <Drop w={10} color="#8a8f98" />
          <Rule />
          <Tool icon="workspace" w={24} />
          <Combo
            dark label="当前图层" value="细实线" w={180}
            lead={<><LayerLead><Icon name="bulb" /><Icon name="sun" /><Icon name="lock" /></LayerLead><Indent $w={4} /><Swatch /></>}
          />
          <Tools names="match preview props undo" w={24} />
          <Drop w={12} />
          <ToolButton type="button" aria-label="customize" $w={16}>
            <svg width="9" height="8"><path d="M0 0h9v1.500H0zM0 3.500h9L4.500 8z" fill={L} /></svg>
          </ToolButton>
          <Caption><span>AutoCAD Architecture 2020</span><span>水工部绘图模板2.0.dwg</span></Caption>
          <ToolButton type="button" aria-label="toggle search" $w={16}>
            <svg width="4" height="8"><path d="M0 0l4 4-4 4z" fill={L} /></svg>
          </ToolButton>
          <HelpSearch aria-label="search" placeholder="键入关键字或短语" />
          <Tool icon="binoc" w={26} />
          <LoginButton type="button"><Icon name="user" />登录</LoginButton>
          <Drop w={10} />
          <Tool icon="cart" w={28} />
          <Tool icon="autodesk" w={22} />
          <Drop w={10} />
          <Rule />
          <Tool icon="helpBlue" />
          <Drop w={12} />
          <WindowButtons><Tools names="min max close" w={24} /></WindowButtons>
        </TitleRow>
        <MenuBar>
          {MENUS.map((m) => (
            <MenuLink key={m} href="#">{m.slice(0, 2)}(<u>{m[2]}</u>)</MenuLink>
          ))}
        </MenuBar>
      </Header>
      <Highlight />

      <ToolbarArea>
        <ToolbarRow>
          <Panel>
            <Grip />
            <Tools names="fresh open save" />
            <Divider />
            <Tools names="print preview publish globe" />
            <Divider />
            <Tools names="cut copy paste match blockEdit" />
            <Divider />
            <Tool icon="undo" /><Drop /><Tool icon="redo" /><Drop color="#a9adb5" />
            <Divider />
            <Tools names="pan zoomRt zoomWin zoomPrev" />
            <Divider />
            <Tools names="props design palettes sheetSet markup calc" />
            <Divider />
            <Tool icon="help" />
          </Panel>
          <Panel>
            <Grip />
            <Tool icon="textStyle" />
            <Combo label="文字样式" value="水工标准" w={120} lead={<Indent $w={15} />} />
            <Divider />
            <Tool icon="dimStyle" />
            <Combo label="标注样式" value="1：20" w={120} lead={<Indent $w={15} />} />
            <Divider />
            <Tool icon="tableStyle" />
            <Combo label="表格样式" value="Standard" w={120} />
            <Divider />
            <Tool icon="leaderStyle" />
            <Combo label="多重引线样式" value="Standard" w={120} lead={<Indent $w={15} />} />
          </Panel>
        </ToolbarRow>
        <ToolbarRow>
          <Panel>
            <Grip />
            <Tool icon="layerProps" />
            <Combo
              label="图层" value="细实线" w={300}
              lead={<><LayerLead><Icon name="bulbOn" /><Icon name="sunOn" /><Icon name="freeze" /><Icon name="lockOn" /></LayerLead><Indent $w={4} /><Swatch /></>}
            />
            <Tools names="layerCurrent layerPrev layerState" />
          </Panel>
          <Panel>
            <Grip />
            <Combo label="颜色" value="ByLayer" w={150} lead={<Swatch />} />
            <Divider />
            <Combo label="线型" value="ByLayer" w={160} lead={<Stroke $w={60} />} />
            <Divider />
            <Combo label="线宽" value="ByLayer" w={125} lead={<Stroke $w={35} />} />
            <Divider />
            <Combo off label="打印样式" value="ByColor" w={120} lead={<Indent $w={5} />} />
          </Panel>
        </ToolbarRow>
      </ToolbarArea>

      <Work>
        <SideBar>
          <Grip $flat />
          <Tools w={22} names="line xline pline polygon rect arc circle cloud spline ellipse ellArc insert block point hatch gradient region table mtext addSel" />
        </SideBar>
        <Frame>
          <FrameInner>
            <DocWindow>
              <DocTitle>
                <Icon name="dwg" />
                水工部绘图模板2.0.dwg
                <DocButtons>
                  <DocButton type="button" aria-label="minimize drawing">
                    <svg width="9" height="4"><rect x=".5" y=".5" width="8" height="3" fill="#fff" stroke="#555" /></svg>
                  </DocButton>
                  <DocButton type="button" aria-label="restore drawing">
                    <svg width="11" height="9"><rect x="1" y="1" width="9" height="7" fill="none" stroke="#fff" strokeWidth="2" /><rect x="3" y="3" width="5" height="3" fill="none" stroke="#555" /></svg>
                  </DocButton>
                </DocButtons>
              </DocTitle>
              <Viewport>
                <Grid />
                <ViewLabel>[−][俯视][二维线框]</ViewLabel>
                <Floating>
                  <FloatBar>
                    <Grip />
                    <Tools names="gridArr pathArr polarArr" />
                    <FloatClose type="button" aria-label="close array bar"><Icon name="closeSm" size={12} /></FloatClose>
                  </FloatBar>
                  <FloatBar>
                    <Tool icon="geoShow" w={14} />
                    <Tool icon="geoAll" />
                    <Divider />
                    <Tools names="aligned dynShow dynAll dynHide" />
                    <Divider />
                    <Tools names="delCon conSet" />
                    <ToolButton type="button" aria-label="parameters manager">
                      <svg width="22" height="22" fontFamily="Liberation Serif, serif" fontStyle="italic" fill={L}>
                        <text x="4" y="15" fontSize="15">f</text><text x="9" y="15" fontSize="9">(x)</text>
                      </svg>
                    </ToolButton>
                    <Divider />
                    <FloatClose type="button" aria-label="close parameter bar"><Icon name="closeSm" size={12} /></FloatClose>
                  </FloatBar>
                </Floating>
                <Cube />
                <Wcs type="button">WCS<svg width="9" height="6"><path d="M1 1h7L4.500 5z" fill="none" stroke="#b9bcc6" /></svg></Wcs>
              </Viewport>
            </DocWindow>
          </FrameInner>
        </Frame>
        <SideBar>
          <Grip $flat />
          <Tools w={22} names="erase copyObj mirror offset array move rotate scale stretch trim" />
        </SideBar>
        <StylesPalette />
      </Work>
    </Shell>
  );
}
